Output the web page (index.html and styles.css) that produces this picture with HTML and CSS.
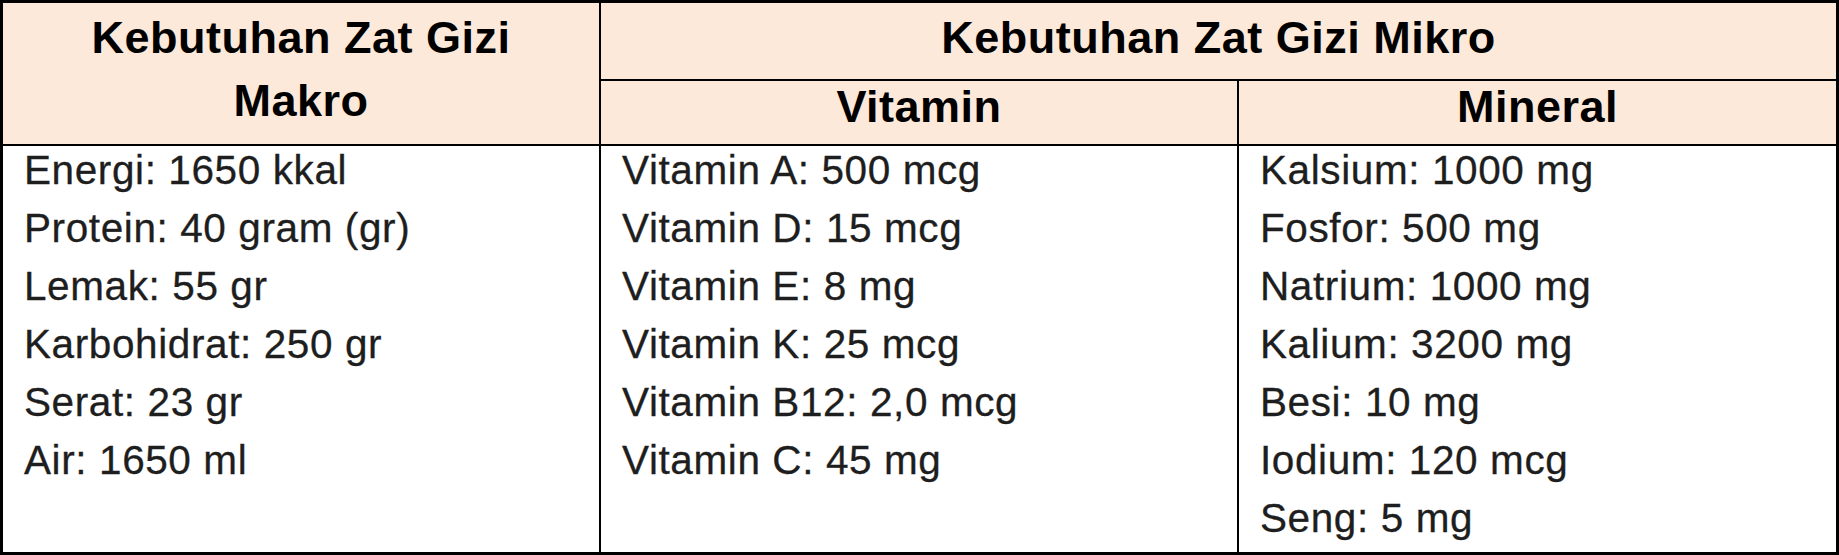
FILE: index.html
```html
<!DOCTYPE html>
<html lang="id">
<head>
<meta charset="utf-8">
<title>Kebutuhan Zat Gizi</title>
<link rel="stylesheet" href="styles.css">
</head>
<body>
<div class="gizi-table">
  <div class="head head-makro">Kebutuhan Zat Gizi<br>Makro</div>
  <div class="head head-mikro">Kebutuhan Zat Gizi Mikro</div>
  <div class="head head-sub">Vitamin</div>
  <div class="head head-sub">Mineral</div>
  <ul class="cell-list">
    <li>Energi: 1650 kkal</li>
    <li>Protein: 40 gram (gr)</li>
    <li>Lemak: 55 gr</li>
    <li>Karbohidrat: 250 gr</li>
    <li>Serat: 23 gr</li>
    <li>Air: 1650 ml</li>
  </ul>
  <ul class="cell-list">
    <li>Vitamin A: 500 mcg</li>
    <li>Vitamin D: 15 mcg</li>
    <li>Vitamin E: 8 mg</li>
    <li>Vitamin K: 25 mcg</li>
    <li>Vitamin B12: 2,0 mcg</li>
    <li>Vitamin C: 45 mg</li>
  </ul>
  <ul class="cell-list">
    <li>Kalsium: 1000 mg</li>
    <li>Fosfor: 500 mg</li>
    <li>Natrium: 1000 mg</li>
    <li>Kalium: 3200 mg</li>
    <li>Besi: 10 mg</li>
    <li>Iodium: 120 mcg</li>
    <li>Seng: 5 mg</li>
  </ul>
</div>
</body>
</html>
```
FILE: styles.css
```css
html, body {
  margin: 0;
  padding: 0;
  background: #ffffff;
}

.gizi-table {
  box-sizing: border-box;
  width: 1839px;
  height: 555px;
  border: 3px solid #000;
  background: #000;
  display: grid;
  grid-template-columns: 596px 636px 597px;
  grid-template-rows: 76px 63px 406px;
  column-gap: 2px;
  row-gap: 2px;
  font-family: "Liberation Sans", Arial, sans-serif;
}

.head {
  background: #fde9d9;
  color: #000;
  font-weight: bold;
  font-size: 45px;
  letter-spacing: 0.5px;
  text-align: center;
}

.head-makro {
  grid-column: 1;
  grid-row: 1 / 3;
  line-height: 63px;
  padding-top: 3px;
}

.head-mikro {
  grid-column: 2 / 4;
  grid-row: 1;
  line-height: 63px;
  padding-top: 3px;
}

.head-sub {
  grid-row: 2;
  line-height: 48px;
  padding-top: 2px;
}

.cell-list {
  list-style: none;
  margin: 0;
  background: #fff;
  padding: 3px 0 0 21px;
  display: flex;
  flex-direction: column;
  gap: 15px;
  font-size: 40.5px;
  line-height: 43px;
  letter-spacing: 0.6px;
  color: #1e1e1e;
  -webkit-text-stroke: 0.3px #1e1e1e;
}
```
